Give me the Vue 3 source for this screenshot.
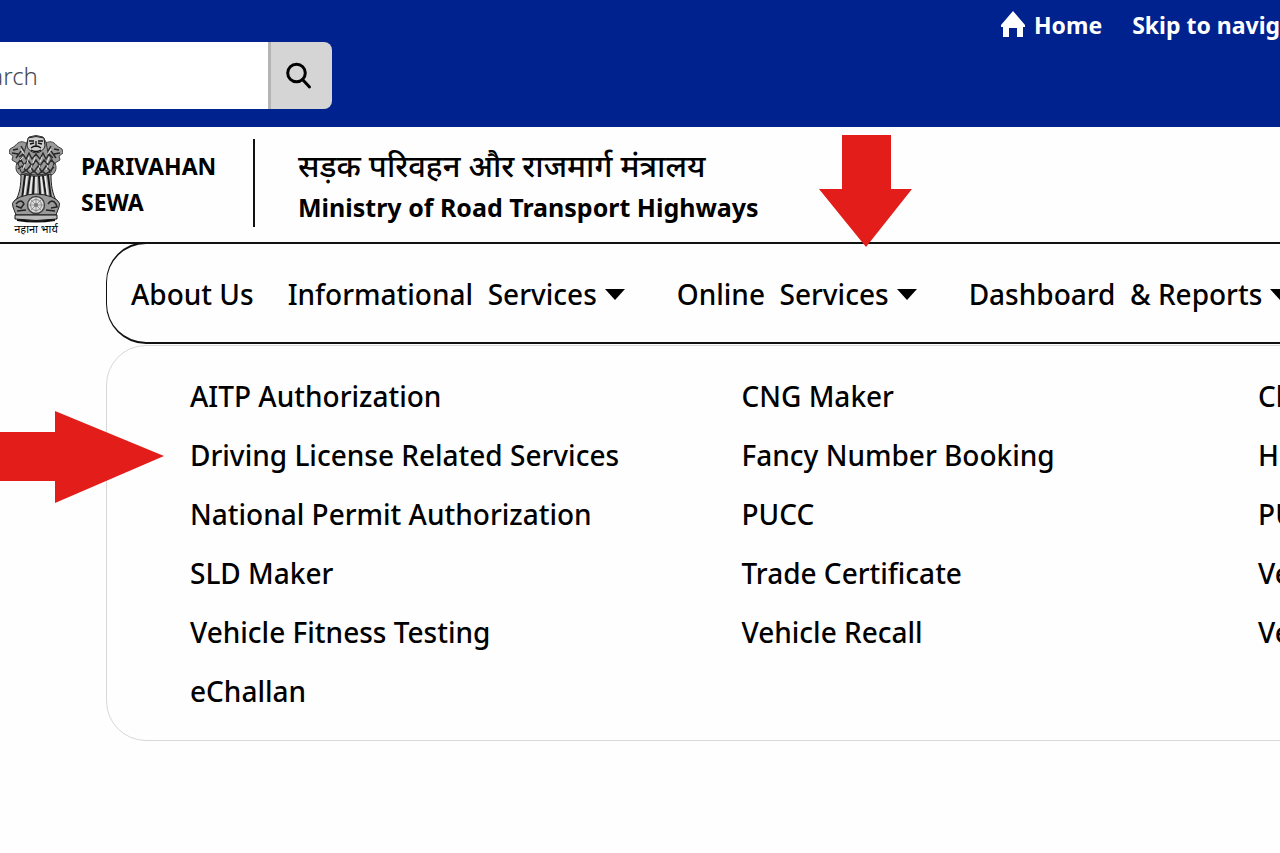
<template>
  <div class="page">
    <header class="topbar">
      <nav class="quick-links" aria-label="Quick links">
        <a href="#home" class="quick-link">
          <svg class="home-icon" viewBox="0 0 26 28" aria-hidden="true">
            <path d="M13 0 L25 14 V16 H23 V26 H17 V17 H9 V26 H3 V16 H1 V14 Z" fill="#fff" />
          </svg>
          Home
        </a>
        <a href="#navigation" class="quick-link">Skip to navigation</a>
      </nav>
      <form class="search" @submit.prevent>
        <input v-model="query" class="search-input" type="text" placeholder="Search" aria-label="Search" />
        <button class="search-button" type="submit" aria-label="Submit search">
          <svg class="search-icon" viewBox="0 0 26 28" aria-hidden="true">
            <circle cx="10.5" cy="11" r="8.8" />
            <path d="M16.5 17.5 L23.5 25" />
          </svg>
        </button>
      </form>
    </header>

    <section class="brand">
      <div class="emblem">
        <svg class="emblem-art" viewBox="0 0 54 88" aria-hidden="true">
          <!-- side lions -->
          <path d="M17 8 C12 5 8 8 6 11 L1 14 L0 18 L4 21 L3 25 L8 28 C5 35 9 40 14 41 L21 39 V13 Z" fill="#999" stroke="#444" />
          <path d="M37 8 C42 5 46 8 48 11 L53 14 L54 18 L50 21 L51 25 L46 28 C49 35 45 40 40 41 L33 39 V13 Z" fill="#999" stroke="#444" />
          <!-- front lion -->
          <path d="M18 7 L20 2 Q27 -1 34 2 L37 7 L39 18 L45 28 L42 37 Q27 43 12 37 L9 28 L15 18 Z" fill="#999" stroke="#333" />
          <path d="M19 3 Q27 0 35 3 L36 11 Q34 17 27 18 Q20 17 18 11 Z" fill="#ccc" stroke="#222" />
          <path d="M20 6 H25 M29 6 H34 M21 9 L25 8 M29 8 L33 9 M27 6 V12 M22 13 Q27 9 32 13 M22 15 Q27 18 32 15" stroke="#111" stroke-width="1.3" fill="none" />
          <!-- manes -->
          <path d="M10 22 L14 19 L17 24 L20 18 L23 24 L27 19 L31 24 L34 18 L37 24 L40 19 L44 23 M8 29 L12 25 L15 30 L19 25 L23 31 L27 25 L31 31 L35 25 L39 30 L42 25 L46 29 M9 34 L13 31 L17 36 L21 31 L25 37 L29 31 L33 37 L37 31 L41 36 L45 32 M13 38 L17 35 L21 39 L25 36 L29 40 L33 36 L37 39 L41 36" stroke="#2b2b2b" stroke-width="1.4" fill="none" />
          <path d="M11 25 L14 22 M18 28 L20 22 M24 28 L26 22 M31 27 L33 22 M38 28 L40 22 M14 34 L16 29 M21 35 L23 30 M29 35 L31 30 M37 35 L39 30 M12 14 L15 19 M42 14 L39 19" stroke="#e5e5e5" stroke-width="1" fill="none" />
          <path d="M4 15 L9 14 M3 18 L9 19 M7 23 L12 16 M50 15 L45 14 M51 18 L45 19 M47 23 L42 16 M12 11 L15 16 M42 11 L39 16" stroke="#222" stroke-width="1.3" fill="none" />
          <!-- legs -->
          <path d="M12 39 C12 50 11 58 6 67 L10 73 H44 L48 67 C43 58 42 50 42 39 Q27 43 12 39 Z" fill="#aaa" stroke="#222" />
          <path d="M16 40 L13 64 M21 41 L18 62 M25 41 L24 59 M30 41 L31 59 M34 41 L37 62 M39 40 L42 64" stroke="#1b1b1b" stroke-width="2" fill="none" />
          <path d="M18 41 L15 64 M23 42 L21 60 M27 42 V59 M32 42 L34 60 M36 41 L39 64" stroke="#eee" stroke-width="1.6" fill="none" />
          <!-- abacus and wheel -->
          <path d="M6 65 Q2 68 4 72 L7 80 H47 L50 72 Q52 68 48 65 L43 62 Q27 56 11 62 Z" fill="#999" stroke="#222" />
          <path d="M7 69 Q12 63 15 69 L12 73 L7 71 M39 69 Q43 63 47 69 L48 72 L42 73 M8 76 L17 75 M37 75 L46 76" stroke="#222" stroke-width="1.5" fill="none" />
          <circle cx="27" cy="70" r="8.5" fill="#ddd" stroke="#444" stroke-width="1.5" />
          <circle cx="27" cy="70" r="5.5" fill="none" stroke="#888" />
          <path d="M27 62 V78 M19 70 H35 M21 64 L33 76 M33 64 L21 76" stroke="#888" stroke-width="0.8" />
          <circle cx="27" cy="70" r="2" fill="#777" />
          <path d="M6 80 H48 V84 Q27 87 6 84 Z" fill="#bbb" stroke="#111" />
          <path d="M8 85 Q27 88 46 85" stroke="#111" stroke-width="2" fill="none" />
        </svg>
        <span class="motto">नहाना भार्य</span>
      </div>
      <div class="site-name">PARIVAHAN<br />SEWA</div>
      <div class="ministry">
        <div class="ministry-hindi" lang="hi">सड़क परिवहन और राजमार्ग मंत्रालय</div>
        <div class="ministry-english">Ministry of Road Transport Highways</div>
      </div>
    </section>

    <nav class="main-nav" aria-label="Main">
      <a
        v-for="item in navItems"
        :key="item.label"
        href="#"
        class="nav-item"
        :class="{ 'has-menu': item.menu }"
      >
        {{ item.label }}
        <svg v-if="item.menu" class="caret" viewBox="0 0 20 11" aria-hidden="true">
          <path d="M0 0 H20 L10 11 Z" />
        </svg>
      </a>
    </nav>

    <section class="dropdown">
      <ul v-for="(column, index) in services" :key="index" class="service-list">
        <li v-for="service in column" :key="service">
          <a href="#">{{ service }}</a>
        </li>
      </ul>
    </section>

    <svg class="arrow-down" viewBox="0 0 93 112" aria-hidden="true">
      <path d="M23 0 H72 V54 H93 L47 112 L0 54 H23 Z" />
    </svg>
    <svg class="arrow-right" viewBox="0 0 164 92" aria-hidden="true">
      <path d="M0 21 H55 V0 L164 45 L55 92 V70 H0 Z" />
    </svg>
  </div>
</template>

<script setup>
import { ref } from 'vue';

const query = ref('');

const navItems = [
  { label: 'About Us', menu: false },
  { label: 'Informational \u00a0Services', menu: true },
  { label: 'Online \u00a0Services', menu: true },
  { label: 'Dashboard \u00a0& Reports', menu: true },
];

const services = [
  [
    'AITP Authorization',
    'Driving License Related Services',
    'National Permit Authorization',
    'SLD Maker',
    'Vehicle Fitness Testing',
    'eChallan',
  ],
  ['CNG Maker', 'Fancy Number Booking', 'PUCC', 'Trade Certificate', 'Vehicle Recall'],
  ['Checkpost Tax', 'Homologation', 'PUCC Maker', 'Vehicle Green Tax', 'Vehicle Related Services'],
];
</script>

<style>
body {
  margin: 0;
  background: #fefefe;
}
</style>

<style scoped>
.page {
  position: relative;
  overflow: hidden;
  min-height: 100vh;
  font-family: "Noto Sans", "Open Sans", sans-serif;
  color: #000;
  white-space: nowrap;
}

a {
  color: inherit;
  text-decoration: none;
}

/* Top bar */
.topbar {
  display: flex;
  flex-direction: row-reverse;
  justify-content: space-between;
  align-items: flex-start;
  box-sizing: border-box;
  height: 127px;
  background: #00228f;
}

.quick-links {
  display: flex;
  gap: 30px;
  width: 280px;
  padding-top: 8px;
  color: #fff;
  font-size: 23px;
  line-height: 34px;
  font-weight: 700;
}

.quick-link {
  display: flex;
  align-items: center;
  gap: 8px;
}

.home-icon {
  width: 26px;
  height: 28px;
}

.search {
  display: flex;
  width: 392px;
  height: 67px;
  margin: 42px 0 0 -60px;
}

.search-input {
  flex: 1;
  min-width: 0;
  padding: 0 24px;
  border: 0;
  border-right: 3px solid #b5b5b8;
  background: #fff;
  font-family: inherit;
  font-size: 24px;
}

.search-input::placeholder {
  color: #444a56;
  font-weight: 300;
  opacity: 1;
}

.search-button {
  display: flex;
  align-items: center;
  justify-content: center;
  width: 61px;
  padding: 0 6px 0 0;
  border: 0;
  border-radius: 0 8px 8px 0;
  background: #d5d5d5;
}

.search-icon {
  width: 26px;
  height: 28px;
  fill: none;
  stroke: #000;
  stroke-width: 3;
  stroke-linecap: round;
}

/* Brand row */
.brand {
  display: flex;
  align-items: center;
  height: 115px;
  border-bottom: 2px solid #111;
}

.emblem {
  display: flex;
  flex-direction: column;
  align-items: center;
  width: 54px;
  margin-left: 9px;
}

.emblem-art {
  width: 54px;
  height: 88px;
}

.motto {
  font-size: 11px;
  line-height: 12px;
}

.site-name {
  box-sizing: border-box;
  width: 192px;
  height: 88px;
  margin-bottom: 4px;
  padding: 9px 0 0 18px;
  border-right: 2px solid #111;
  font-size: 23px;
  line-height: 36px;
  font-weight: 700;
}

.ministry {
  padding-left: 43px;
}

.ministry-hindi {
  font-size: 31px;
  line-height: 44px;
  font-weight: 500;
}

.ministry-english {
  font-size: 25px;
  line-height: 40px;
  font-weight: 700;
}

/* Main navigation */
.main-nav {
  display: flex;
  align-items: center;
  gap: 34px;
  box-sizing: border-box;
  height: 102px;
  margin: -2px -60px 0 106px;
  padding: 2px 0 0 24px;
  border: 2px solid #111;
  border-left-width: 1px;
  border-radius: 40px;
  font-size: 28px;
  font-weight: 500;
}

.nav-item {
  display: flex;
  flex-shrink: 0;
  align-items: center;
  gap: 8px;
}

.has-menu {
  margin-right: 18px;
}

.caret {
  width: 20px;
  height: 11px;
}

/* Services menu */
.dropdown {
  display: grid;
  grid-template-columns: minmax(0, 552fr) minmax(0, 517fr) minmax(0, 81fr);
  margin: 1px -60px 0 106px;
  padding: 21px 0 19px 83px;
  border: 1px solid #d8d8d8;
  border-radius: 40px;
  font-size: 28px;
  line-height: 59px;
  font-weight: 500;
}

.service-list {
  margin: 0;
  padding: 0;
  list-style: none;
}

/* Pointer arrows */
.arrow-down,
.arrow-right {
  position: absolute;
  fill: #e31e1a;
  pointer-events: none;
}

.arrow-down {
  top: 135px;
  left: 819px;
  width: 93px;
  height: 112px;
}

.arrow-right {
  top: 411px;
  left: 0;
  width: 164px;
  height: 92px;
}
</style>
